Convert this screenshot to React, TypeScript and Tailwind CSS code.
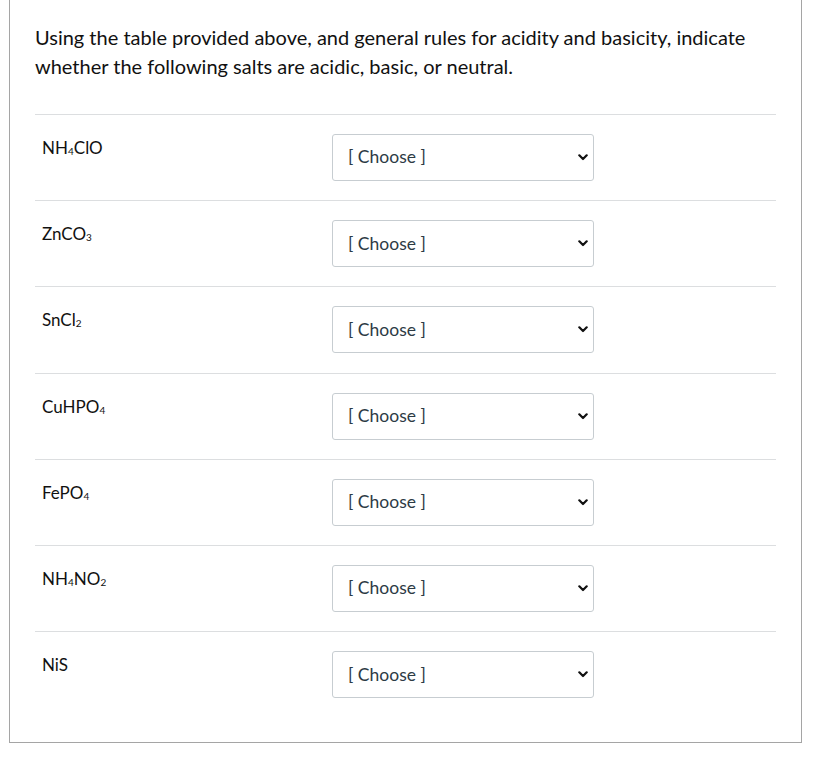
import type { ReactNode } from "react";

const ROWS: { id: string; label: ReactNode }[] = [
  { id: "q1", label: <>NH<Sub>4</Sub>ClO</> },
  { id: "q2", label: <>ZnCO<Sub>3</Sub></> },
  { id: "q3", label: <>SnCl<Sub>2</Sub></> },
  { id: "q4", label: <>CuHPO<Sub>4</Sub></> },
  { id: "q5", label: <>FePO<Sub>4</Sub></> },
  { id: "q6", label: <>NH<Sub>4</Sub>NO<Sub>2</Sub></> },
  { id: "q7", label: <>NiS</> },
];

function Sub({ children }: { children: ReactNode }) {
  return <sub className="text-[10px] leading-none relative -bottom-[1px]">{children}</sub>;
}

function ChooseSelect({ id }: { id: string }) {
  return (
    <div className="relative w-[262px] h-[47px]">
      <select
        id={id}
        defaultValue=""
        className="appearance-none w-full h-full rounded-[3px] border border-[#c7cdd1] bg-white pl-[15px] pr-8 text-[17.5px] text-[#2d3b45] outline-none"
      >
        <option value="">[ Choose ]</option>
        <option value="acidic">acidic</option>
        <option value="basic">basic</option>
        <option value="neutral">neutral</option>
      </select>
      <svg
        className="pointer-events-none absolute right-[6px] top-[20px]"
        width="10"
        height="7"
        viewBox="0 0 10 7"
        fill="none"
      >
        <path d="M1.3 1.3 5 5 8.7 1.3" stroke="#111" strokeWidth="2.2" strokeLinecap="round" strokeLinejoin="round" />
      </svg>
    </div>
  );
}

export default function App() {
  return (
    <div className="bg-white min-h-[757px] pl-[9px] font-['Lato','Liberation_Sans',sans-serif] text-[#2d3b45]">
      <div className="w-[793px] border-x border-b border-[#a5a5a5] px-[25px] pt-[23px] pb-[25px]">
        <p className="text-[20px] leading-[28.5px] text-[#111] mb-[34px]">
          Using the table provided above, and general rules for acidity and basicity, indicate whether the following
          salts are acidic, basic, or neutral.
        </p>

        <div>
          {ROWS.map((row) => (
            <div key={row.id} className="flex items-start border-t border-[#dcdee0] h-[86.2px] pt-[19px]">
              <label htmlFor={row.id} className="w-[297px] pl-[7px] pt-[2px] text-[17px] leading-[24px] text-[#111]">
                {row.label}
              </label>
              <ChooseSelect id={row.id} />
            </div>
          ))}
        </div>
      </div>
    </div>
  );
}
